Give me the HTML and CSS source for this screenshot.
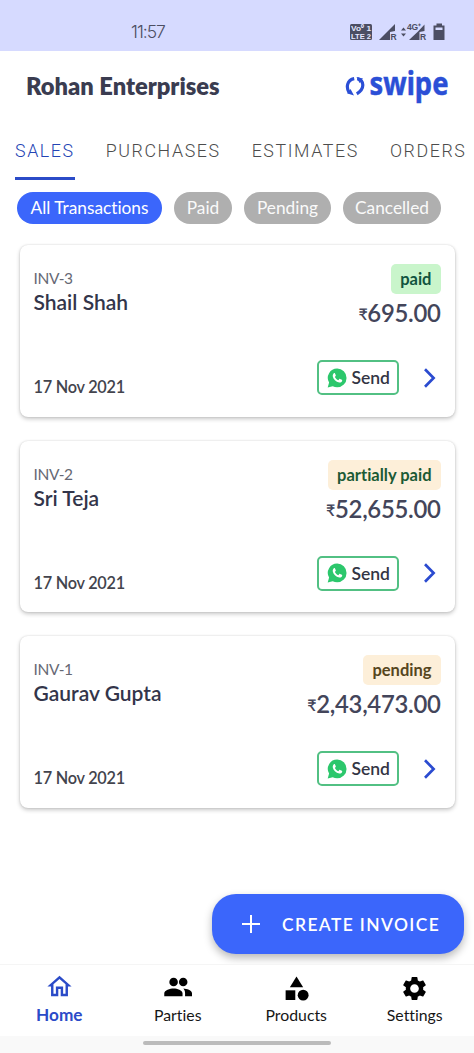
FILE: index.html
```html
<!DOCTYPE html>
<html lang="en">
<head>
<meta charset="utf-8">
<title>Swipe invoices</title>
<link rel="stylesheet" href="styles.css">
</head>
<body>
<svg class="defs" width="0" height="0">
  <symbol id="whatsapp" viewBox="0 0 20 20">
    <path fill="#2cc76c" d="M10.2.6a9.3 9.3 0 0 1 0 18.7 9.4 9.4 0 0 1-4.5-1.1L.7 19.500l1.400-4.900A9.3 9.3 0 0 1 10.200.6z"/>
    <path fill="#fff" d="M6.800 5.300c.3-.3 1-.3 1.200.2l.8 1.800c.1.300 0 .6-.2.800l-.7.800c.8 1.600 1.900 2.600 3.500 3.300l.9-1.100c.2-.2.500-.3.700-.2l1.900.9c.4.200.4.700.2 1.200-.4 1.100-1.700 1.700-2.800 1.500C8.800 13.900 6.300 11.300 5.800 8.500c-.2-1.200.2-2.400 1-3.200z"/>
  </symbol>
  <symbol id="chevron" viewBox="0 0 14 20">
    <path fill="none" stroke="#2b4bd0" stroke-width="2.700" d="M2 1.300 10.600 10 2 18.700"/>
  </symbol>
</svg>
<div class="status">
  <span class="clock">11:57</span>
  <svg class="status-icons" width="100" height="22" viewBox="0 0 100 22">
    <rect x="1" y="3" width="22" height="16" rx="1.500" fill="#4c4e63"/>
    <text x="2" y="10" class="volte" textLength="20" lengthAdjust="spacingAndGlyphs">Vo⁰ 1</text>
    <text x="2" y="18" class="volte" textLength="20" lengthAdjust="spacingAndGlyphs">LTE 2</text>
    <path fill="#4c4e63" d="M30 19 46 3v7l-5 1v8z"/>
    <text x="41.500" y="19" class="sig">R</text>
    <path fill="#4c4e63" d="m52 9.500 2.500-3 2.500 3zM52 12.500l2.500 3 2.500-3z"/>
    <text x="58" y="9" class="sig" textLength="14">4G⁺</text>
    <path fill="#4c4e63" d="M60 19 69 10.500l6.500-7V10l-5 1v8z"/>
    <text x="71" y="19" class="sig">R</text>
    <path fill="#4c4e63" d="M87.500 2.500h5.500v2h2.500v14.500H84.500V4.500h3z"/>
    <path fill="#d6daff" d="M86.500 6.500h7v2.500h-7z"/>
  </svg>
</div>
<header class="header">
  <h1>Rohan Enterprises</h1>
  <svg class="logo" width="106" height="50" viewBox="0 -12 106 50">
    <path class="ring" d="M9.200 8.600C2 10 .8 17 4.200 23M12.300 8.600C19.500 10.500 20 19 11.800 23.800"/>
    <path fill="#2b4fd6" d="M2.500 23.500 9 25.500 5.500 19zM18 8.500 11.500 7l3 6z"/>
    <text class="logo-text" x="24.500" y="25.300" textLength="79" lengthAdjust="spacingAndGlyphs">swipe</text>
  </svg>
</header>
<nav class="tabs">
  <span class="tab tab-on">SALES</span>
  <span class="tab">PURCHASES</span>
  <span class="tab">ESTIMATES</span>
  <span class="tab">ORDERS</span>
</nav>
<div class="chips">
  <span class="chip chip-on">All Transactions</span>
  <span class="chip chip-paid">Paid</span>
  <span class="chip chip-pending">Pending</span>
  <span class="chip chip-cancelled">Cancelled</span>
</div>
<main class="list">
  <article class="card">
    <div class="left">
      <span class="inv">INV-3</span>
      <span class="name">Shail Shah</span>
      <span class="date">17 Nov 2021</span>
    </div>
    <div class="right">
      <span class="badge paid">paid</span>
      <span class="amount"><span class="rupee">₹</span>695.00</span>
      <div class="actions">
        <span class="send"><svg width="20" height="20"><use href="#whatsapp"/></svg>Send</span>
        <svg class="chev" width="14" height="20"><use href="#chevron"/></svg>
      </div>
    </div>
  </article>
  <article class="card">
    <div class="left">
      <span class="inv">INV-2</span>
      <span class="name">Sri Teja</span>
      <span class="date">17 Nov 2021</span>
    </div>
    <div class="right">
      <span class="badge partial">partially paid</span>
      <span class="amount"><span class="rupee">₹</span>52,655.00</span>
      <div class="actions">
        <span class="send"><svg width="20" height="20"><use href="#whatsapp"/></svg>Send</span>
        <svg class="chev" width="14" height="20"><use href="#chevron"/></svg>
      </div>
    </div>
  </article>
  <article class="card">
    <div class="left">
      <span class="inv">INV-1</span>
      <span class="name">Gaurav Gupta</span>
      <span class="date">17 Nov 2021</span>
    </div>
    <div class="right">
      <span class="badge pending">pending</span>
      <span class="amount"><span class="rupee">₹</span>2,43,473.00</span>
      <div class="actions">
        <span class="send"><svg width="20" height="20"><use href="#whatsapp"/></svg>Send</span>
        <svg class="chev" width="14" height="20"><use href="#chevron"/></svg>
      </div>
    </div>
  </article>
</main>
<div class="fab-row">
  <div class="fab">
    <svg width="18" height="18" viewBox="0 0 18 18"><path d="M9 0v18M0 9h18" stroke="#fff" stroke-width="2"/></svg>
    <span class="fab-label">CREATE INVOICE</span>
  </div>
</div>
<nav class="bottom">
  <div class="item item-on">
    <svg width="29" height="29" viewBox="0 0 24 24"><path fill="#2b4bc8" d="m12 5.690 5 4.500V18h-2v-6H9v6H7v-7.810l5-4.500M12 3 2 12h3v8h6v-6h2v6h6v-8h3L12 3z"/></svg>
    <span class="item-label">Home</span>
  </div>
  <div class="item">
    <svg width="32" height="32" viewBox="0 0 24 24"><circle cx="8.700" cy="8.200" r="3.200"/><circle cx="15.900" cy="8.200" r="3.200"/><path d="M1.700 19v-2.300c0-2.400 4.300-3.600 7-3.600s6.700 1.200 6.700 3.600V19zM16 13.200c2.500.2 6.500 1.300 6.500 3.500V19h-5.200v-2.300c0-1.500-.5-2.600-1.300-3.500z"/></svg>
    <span class="item-label">Parties</span>
  </div>
  <div class="item">
    <svg width="29" height="29" viewBox="0 0 24 24"><path d="m12 2 5.500 9h-11z"/><circle cx="17.500" cy="17.500" r="4.500"/><path d="M3 13.500h8v8H3z"/></svg>
    <span class="item-label">Products</span>
  </div>
  <div class="item">
    <svg width="29" height="29" viewBox="0 0 24 24"><path d="M19.140 12.940c.04-.3.060-.610.060-.940 0-.320-.020-.640-.070-.940l2.030-1.580c.180-.140.230-.410.120-.610l-1.920-3.320c-.120-.220-.370-.290-.590-.220l-2.390.960c-.5-.380-1.030-.7-1.620-.940l-.360-2.540c-.040-.240-.240-.410-.480-.410h-3.840c-.240 0-.430.170-.470.410l-.360 2.540c-.590.240-1.130.570-1.620.940l-2.390-.960c-.220-.080-.470 0-.590.220L2.740 8.870c-.120.210-.080.470.120.610l2.030 1.580c-.050.300-.090.630-.090.940s.020.640.070.940l-2.030 1.580c-.180.140-.230.410-.120.610l1.920 3.320c.120.220.370.290.590.220l2.390-.960c.5.380 1.030.7 1.620.940l.36 2.540c.050.240.240.410.480.410h3.840c.240 0 .440-.170.470-.410l.36-2.540c.590-.240 1.130-.560 1.620-.940l2.390.96c.220.080.470 0 .590-.220l1.920-3.320c.120-.220.070-.470-.120-.610l-2.010-1.580zM12 15.600c-1.980 0-3.600-1.620-3.600-3.600s1.620-3.600 3.600-3.600 3.600 1.620 3.600 3.600-1.620 3.600-3.600 3.600z"/></svg>
    <span class="item-label">Settings</span>
  </div>
</nav>
<footer class="gesture"><div class="handle"></div></footer>
</body>
</html>
```

FILE: styles.css
```css
* { box-sizing: border-box; }
body {
  margin: 0;
  width: 474px;
  height: 1053px;
  overflow: hidden;
  background: #fff;
  font-family: Lato, "Noto Sans", sans-serif;
  font-variant-ligatures: none;
  display: flex;
  flex-direction: column;
}
svg { display: block; flex: none; }
.defs { display: none; }
span { white-space: nowrap; }

.status {
  height: 51px;
  flex: none;
  background: #d6daff;
  display: flex;
  justify-content: space-between;
  padding: 21px 25px 0 131px;
}
.clock {
  font: 300 17.500px/22px Inter, Roboto, sans-serif;
  letter-spacing: -1px;
  color: #4c4e63;
}
.volte { font: 700 8px "Liberation Sans", sans-serif; fill: #e6e8ff; }
.sig { font: 700 8.500px "Liberation Sans", sans-serif; fill: #4c4e63; }

.header {
  height: 69px;
  flex: none;
  display: flex;
  justify-content: space-between;
  padding: 7px 23px 0 26px;
}
h1 {
  margin: 12px 0 0;
  font-size: 23.700px;
  line-height: 32px;
  font-weight: 800;
  color: #3a3c50;
}
.logo-text { font: 700 32.500px "Noto Sans", sans-serif; fill: #2b4fd6; stroke: #2b4fd6; stroke-width: .5; }
.ring { fill: none; stroke: #2b4fd6; stroke-width: 3.200; }

.tabs {
  height: 60px;
  flex: none;
  display: flex;
  gap: 31px;
  padding-left: 15px;
}
.tab {
  height: 60px;
  font: 300 17.800px/62px Roboto, sans-serif;
  letter-spacing: 1.600px;
  color: #4c4c4c;
}
.tab-on { color: #2444b4; border-bottom: 3px solid #2b4bc8; }

.chips {
  height: 65px;
  flex: none;
  display: flex;
  gap: 12px;
  padding: 12px 0 0 17px;
}
.chip {
  height: 32px;
  width: 145px;
  border-radius: 16px;
  text-align: center;
  font-size: 17.300px;
  line-height: 32px;
  color: #fafafa;
  background: #afafaf;
}
.chip-on { background: #3b66fb; color: #fff; }
.chip-paid { width: 58px; }
.chip-pending { width: 87px; }
.chip-cancelled { width: 98px; }

.list {
  height: 649px;
  flex: none;
  display: flex;
  flex-direction: column;
  gap: 24px;
  padding: 0 19.500px;
}
.card {
  height: 171.700px;
  flex: none;
  display: flex;
  justify-content: space-between;
  padding: 0 14px;
  border-radius: 8px;
  background: #fff;
  box-shadow: 0 2px 4px rgba(0,0,0,.22), 0 0 2px rgba(0,0,0,.14);
}
.left { display: flex; flex-direction: column; padding-top: 22px; }
.inv { font-size: 15.500px; line-height: 22px; letter-spacing: -.35px; color: #666873; }
.name { font-size: 21px; line-height: 26px; font-weight: 600; color: #33354a; }
.date { margin-top: 61px; font-size: 16.300px; line-height: 22px; letter-spacing: -.25px; font-weight: 600; color: #43444d; }
.right { display: flex; flex-direction: column; align-items: flex-end; padding-top: 19px; }
.badge {
  height: 30px;
  padding: 0 9px;
  border-radius: 5px;
  font-size: 16.500px;
  line-height: 31px;
  font-weight: 700;
}
.paid { background: #c9f5cb; color: #12543f; }
.partial { background: #fdefd9; color: #1c5a35; }
.pending { background: #fdefd9; color: #56461d; }
.amount { font-size: 23.900px; line-height: 36px; margin-top: 1px; letter-spacing: -.3px; font-weight: 600; color: #43455a; }
.rupee { font-size: 16px; vertical-align: 2px; }
.actions { display: flex; align-items: center; margin-top: 28px; gap: 24px; padding-right: 4px; }
.send {
  width: 82px;
  height: 35px;
  display: flex;
  align-items: center;
  gap: 5px;
  padding-left: 8px;
  border: 2px solid #52c083;
  border-radius: 5px;
  font-size: 17.500px;
  font-weight: 600;
  color: #333544;
}

.fab-row {
  height: 70px;
  flex: none;
  display: flex;
  justify-content: flex-end;
  padding-right: 10px;
}
.fab {
  width: 252px;
  height: 60px;
  display: flex;
  align-items: center;
  gap: 22px;
  padding-left: 30px;
  border-radius: 24px;
  background: #3b66fb;
  box-shadow: 0 4px 8px rgba(0,0,0,.28);
}
.fab-label { font-size: 17.400px; font-weight: 600; letter-spacing: 1.400px; color: #fff; }

.bottom {
  height: 72px;
  flex: none;
  display: flex;
  background: #fff;
  border-top: 1px solid #f5f5f5;
  position: relative;
}
.item {
  width: 118.500px;
  height: 63px;
  display: flex;
  flex-direction: column;
  align-items: center;
  justify-content: flex-end;
}
.item-on .item-label { color: #2b4bc8; font-weight: 700; font-size: 17.200px; }
.item svg { margin-bottom: -1px; }
.item-on svg { margin-bottom: 1px; }
.item-label { font-size: 15.800px; line-height: 26px; color: #161616; }
.gesture { height: 17px; flex: none; background: #f9f9f9; padding: 5px 0 0 143px; }
.handle { width: 188px; height: 4px; border-radius: 2px; background: #bbb; }
```
